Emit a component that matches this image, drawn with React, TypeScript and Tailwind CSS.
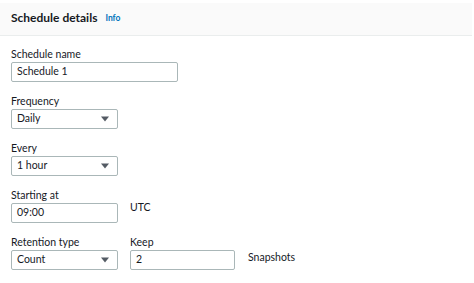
const Caret = () => (
	<svg width="8" height="6" viewBox="0 0 8 6" className="fill-[#545b64]">
		<path d="M0 0.5h8L4 5.5z" />
	</svg>
);

const Field = ({ label, children }: { label: string; children: React.ReactNode }) => (
	<div className="flex flex-col">
		<label className="h-[14px] text-[10.5px] leading-[14px] text-[#16191f]">{label}</label>
		<div className="mt-[1px]">{children}</div>
	</div>
);

const TextBox = ({ value, width }: { value: string; width: string }) => (
	<div
		className={`flex h-[20px] ${width} items-center rounded-[2px] border border-[#aab7b8] bg-white px-[5px] text-[10.5px] text-[#16191f]`}
	>
		{value}
	</div>
);

const SelectBox = ({ value }: { value: string }) => (
	<div className="flex h-[20px] w-[107px] items-center justify-between rounded-[2px] border border-[#aab7b8] bg-white pr-[8px] pl-[5px] text-[10.5px] text-[#16191f]">
		<span>{value}</span>
		<Caret />
	</div>
);

export default function App() {
	return (
		<div className="h-[283px] w-[474px] overflow-hidden bg-white font-['Lato',sans-serif]">
			<div className="mt-[3px] mr-[2px] flex h-[33px] items-center gap-[8px] border-b border-[#eaeded] bg-[#fafafa] px-[11px] pb-[2px]">
				<h2 className="text-[12px] font-bold text-[#16191f]">Schedule details</h2>
				<a className="pt-[1px] text-[8.5px] font-bold text-[#0073bb]">Info</a>
			</div>
			<div className="flex flex-col gap-[12px] px-[11px] pt-[11px]">
				<Field label="Schedule name">
					<TextBox value="Schedule 1" width="w-[167px]" />
				</Field>
				<Field label="Frequency">
					<SelectBox value="Daily" />
				</Field>
				<Field label="Every">
					<SelectBox value="1 hour" />
				</Field>
				<div className="flex items-end gap-[12px]">
					<Field label="Starting at">
						<TextBox value="09:00" width="w-[107px]" />
					</Field>
					<span className="mb-[7px] text-[10.5px] text-[#16191f]">UTC</span>
				</div>
				<div className="flex items-end">
					<Field label="Retention type">
						<SelectBox value="Count" />
					</Field>
					<div className="ml-[12px]">
						<Field label="Keep">
							<TextBox value="2" width="w-[105px]" />
						</Field>
					</div>
					<span className="mb-[4px] ml-[13px] text-[10.5px] text-[#16191f]">Snapshots</span>
				</div>
			</div>
		</div>
	);
}
